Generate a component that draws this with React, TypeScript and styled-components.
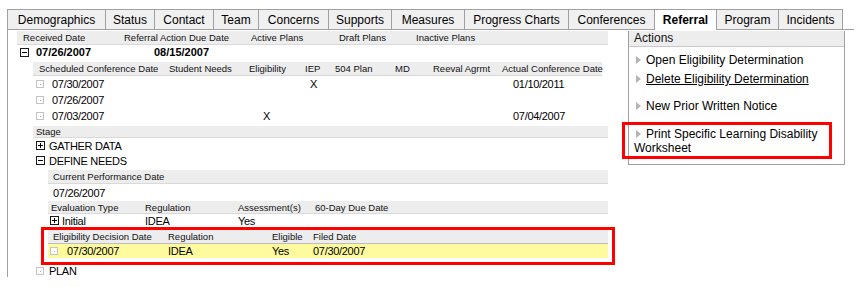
import React from "react";
import styled, { createGlobalStyle } from "styled-components";

const GlobalStyle = createGlobalStyle`
  html, body { margin: 0; padding: 0; background: #ffffff; }
  body { font-family: "Liberation Sans", Arial, Helvetica, sans-serif; color: #000; }
  * { box-sizing: border-box; }
`;

const Page = styled.div`
  width: 866px;
  height: 287px;
  overflow: hidden;
  padding: 9px 0 0 7px;
`;

const TabBar = styled.div`
  display: flex;
  width: 847px;
  height: 21px;
  border-bottom: 1px solid #a0a0a0;
`;

const Tab = styled.div<{ $w: number; $active?: boolean; $first?: boolean }>`
  width: ${(p) => p.$w}px;
  height: ${(p) => (p.$active ? 21 : 20)}px;
  border-top: 1px solid #a0a0a0;
  border-right: 1px solid #a0a0a0;
  border-left: ${(p) => (p.$first ? "1px solid #a0a0a0" : "none")};
  background: ${(p) => (p.$active ? "#ffffff" : "#f0f0f0")};
  font-size: 12px;
  font-weight: ${(p) => (p.$active ? 700 : 400)};
  display: flex;
  align-items: center;
  justify-content: center;
  padding-bottom: ${(p) => (p.$active ? 1 : 0)}px;
  white-space: nowrap;
`;

const Content = styled.div`
  display: flex;
  align-items: flex-start;
  gap: 12px;
`;

const LeftPanel = styled.div`
  width: 609px;
  height: 247px;
  border-left: 1px solid #a0a0a0;
  padding: 1px 8px 0 9px;
`;

const Block = styled.div<{ $ml?: number; $mt?: number; $mr?: number }>`
  display: flex;
  flex-direction: column;
  margin-left: ${(p) => p.$ml ?? 0}px;
  margin-top: ${(p) => p.$mt ?? 0}px;
  margin-right: ${(p) => p.$mr ?? 0}px;
`;

const HeadRow = styled.div<{ $cols: string; $h: number; $pad: number; $line?: string }>`
  display: grid;
  grid-template-columns: ${(p) => p.$cols};
  height: ${(p) => p.$h}px;
  padding-left: ${(p) => p.$pad}px;
  background: #ededed;
  border-bottom: 1px solid ${(p) => p.$line ?? "#d9d9d9"};
  font-size: 9.5px;
  color: #111;
  align-items: center;
  white-space: nowrap;
`;

const DataRow = styled.div<{ $cols: string; $h: number; $pad: number; $bg?: string; $bold?: boolean }>`
  display: grid;
  grid-template-columns: ${(p) => p.$cols};
  height: ${(p) => p.$h}px;
  padding-left: ${(p) => p.$pad}px;
  background: ${(p) => p.$bg ?? "transparent"};
  font-size: 11px;
  font-weight: ${(p) => (p.$bold ? 700 : 400)};
  letter-spacing: ${(p) => (p.$bold ? "0" : "-0.3px")};
  align-items: center;
  white-space: nowrap;
`;

const Cell = styled.span<{ $pl?: number; $gap?: number; $ml?: number }>`
  display: flex;
  align-items: center;
  gap: ${(p) => p.$gap ?? 0}px;
  padding-left: ${(p) => p.$pl ?? 0}px;
  margin-left: ${(p) => p.$ml ?? 0}px;
`;

const Highlight = styled.div`
  margin: 0 -7px;
  border: 3px solid #ff0000;
  border-top-width: 3px;
  padding: 0 4px 4px 4px;
  display: flex;
  flex-direction: column;
`;

const ActionsPanel = styled.div`
  width: 217px;
  margin-top: 1px;
  border: 1px solid #a0a0a0;
  border-top: none;
  padding-bottom: 5px;
  display: flex;
  flex-direction: column;
`;

const ActionsHeader = styled.div`
  height: 16px;
  background: #ededed;
  border-bottom: 1px solid #c8c8c8;
  font-size: 12px;
  line-height: 15px;
  padding-left: 5px;
  color: #111;
`;

const ActionItem = styled.div<{ $mt: number; $underline?: boolean; $pl?: number }>`
  margin-top: ${(p) => p.$mt}px;
  padding-left: ${(p) => p.$pl ?? 5}px;
  font-size: 12px;
  line-height: 14px;
  color: #000;
  text-decoration: ${(p) => (p.$underline ? "underline" : "none")};
`;

const ActionHighlight = styled.div`
  margin: 9px 12px 0 -7px;
  border: 3px solid #ff0000;
  padding: 2px 3px 1px 9px;
`;

const Arrow = styled.span`
  display: inline-block;
  width: 0;
  height: 0;
  margin: 0 5px 0 2px;
  border-top: 4px solid transparent;
  border-bottom: 4px solid transparent;
  border-left: 5px solid #b4b4b4;
  vertical-align: 0px;
`;

const Toggle = ({ open }: { open: boolean }) => (
  <svg width="9" height="9" viewBox="0 0 9 9" shapeRendering="crispEdges" style={{ flex: "none" }}>
    <rect x="0.5" y="0.5" width="8" height="8" fill="#fff" stroke="#1a1a1a" />
    <line x1="2" y1="4.5" x2="7" y2="4.5" stroke="#000" />
    {!open && <line x1="4.5" y1="2" x2="4.5" y2="7" stroke="#000" />}
  </svg>
);

const Leaf = () => (
  <svg width="8" height="8" viewBox="0 0 8 8" shapeRendering="crispEdges" style={{ flex: "none" }}>
    <rect x="0.5" y="0.5" width="7" height="7" fill="#fff" stroke="#c4c4c4" />
    <rect x="3.5" y="3.5" width="1" height="1" fill="#b0b0b0" />
  </svg>
);

const tabs: { label: string; w: number; active?: boolean }[] = [
  { label: "Demographics", w: 99 },
  { label: "Status", w: 49 },
  { label: "Contact", w: 59 },
  { label: "Team", w: 45 },
  { label: "Concerns", w: 70 },
  { label: "Supports", w: 63 },
  { label: "Measures", w: 73 },
  { label: "Progress Charts", w: 104 },
  { label: "Conferences", w: 86 },
  { label: "Referral", w: 62, active: true },
  { label: "Program", w: 62 },
  { label: "Incidents", w: 64 },
];

const L0_COLS = "101px 127px 88px 77px 1fr";
const CONF_COLS = "130px 80px 56px 30px 60px 38px 69px 1fr";
const EVAL_COLS = "94px 93px 77px 1fr";
const ELIG_COLS = "115px 104px 41px 1fr";

const conferences = [
  { date: "07/30/2007", elig: "", iep: "X", actual: "01/10/2011" },
  { date: "07/26/2007", elig: "", iep: "", actual: "" },
  { date: "07/03/2007", elig: "X", iep: "", actual: "07/04/2007" },
];

export default function App() {
  return (
    <>
      <GlobalStyle />
      <Page>
        <TabBar>
          {tabs.map((t, i) => (
            <Tab key={t.label} $w={t.w} $active={t.active} $first={i === 0}>
              {t.label}
            </Tab>
          ))}
        </TabBar>
        <Content>
          <LeftPanel>
            <Block>
              <HeadRow $cols={L0_COLS} $h={14} $pad={6}>
                <span>Received Date</span>
                <span>Referral Action Due Date</span>
                <span>Active Plans</span>
                <span>Draft Plans</span>
                <span>Inactive Plans</span>
              </HeadRow>
              <DataRow $cols="134px 1fr" $h={14} $pad={3} $bold>
                <Cell $gap={7}>
                  <Toggle open />
                  07/26/2007
                </Cell>
                <Cell>08/15/2007</Cell>
              </DataRow>

              <Block $ml={16} $mt={3} $mr={6}>
                <HeadRow $cols={CONF_COLS} $h={14} $pad={6}>
                  <span>Scheduled Conference Date</span>
                  <span>Student Needs</span>
                  <span>Eligibility</span>
                  <span>IEP</span>
                  <span>504 Plan</span>
                  <span>MD</span>
                  <span>Reeval Agrmt</span>
                  <span>Actual Conference Date</span>
                </HeadRow>
                {conferences.map((c) => (
                  <DataRow key={c.date} $cols={CONF_COLS} $h={16} $pad={6}>
                    <Cell $ml={-3} $gap={8}>
                      <Leaf />
                      {c.date}
                    </Cell>
                    <Cell />
                    <Cell $pl={14}>{c.elig}</Cell>
                    <Cell $pl={5}>{c.iep}</Cell>
                    <Cell />
                    <Cell />
                    <Cell />
                    <Cell $pl={11}>{c.actual}</Cell>
                  </DataRow>
                ))}
              </Block>

              <Block $ml={16} $mt={2}>
                <HeadRow $cols="1fr" $h={12} $pad={3}>
                  <span>Stage</span>
                </HeadRow>
                <DataRow $cols="1fr" $h={15} $pad={3}>
                  <Cell $gap={4}>
                    <Toggle open={false} />
                    GATHER DATA
                  </Cell>
                </DataRow>
                <DataRow $cols="1fr" $h={15} $pad={3}>
                  <Cell $gap={4}>
                    <Toggle open />
                    DEFINE NEEDS
                  </Cell>
                </DataRow>

                <Block $ml={15} $mt={2}>
                  <HeadRow $cols="1fr" $h={14} $pad={5}>
                    <span>Current Performance Date</span>
                  </HeadRow>
                  <DataRow $cols="1fr" $h={17} $pad={5}>
                    <Cell>07/26/2007</Cell>
                  </DataRow>
                  <HeadRow $cols={EVAL_COLS} $h={13} $pad={3}>
                    <span>Evaluation Type</span>
                    <span>Regulation</span>
                    <span>Assessment(s)</span>
                    <span>60-Day Due Date</span>
                  </HeadRow>
                  <DataRow $cols={EVAL_COLS} $h={13} $pad={3}>
                    <Cell $ml={-1} $gap={3}>
                      <Toggle open={false} />
                      Initial
                    </Cell>
                    <Cell>IDEA</Cell>
                    <Cell>Yes</Cell>
                    <Cell />
                  </DataRow>
                  <Highlight>
                    <HeadRow $cols={ELIG_COLS} $h={14} $pad={5} $line="#bdbdbd">
                      <span>Eligibility Decision Date</span>
                      <span>Regulation</span>
                      <span>Eligible</span>
                      <span>Filed Date</span>
                    </HeadRow>
                    <DataRow $cols={ELIG_COLS} $h={14} $pad={5} $bg="#fefb9f">
                      <Cell $ml={-3} $gap={9}>
                        <Leaf />
                        07/30/2007
                      </Cell>
                      <Cell>IDEA</Cell>
                      <Cell>Yes</Cell>
                      <Cell>07/30/2007</Cell>
                    </DataRow>
                  </Highlight>
                </Block>

                <DataRow $cols="1fr" $h={12} $pad={3}>
                  <Cell $gap={5}>
                    <Leaf />
                    PLAN
                  </Cell>
                </DataRow>
              </Block>
            </Block>
          </LeftPanel>

          <ActionsPanel>
            <ActionsHeader>Actions</ActionsHeader>
            <ActionItem $mt={6}>
              <Arrow />
              Open Eligibility Determination
            </ActionItem>
            <ActionItem $mt={5}>
              <Arrow />
              <span style={{ textDecoration: "underline" }}>Delete Eligibility Determination</span>
            </ActionItem>
            <ActionItem $mt={13}>
              <Arrow />
              New Prior Written Notice
            </ActionItem>
            <ActionHighlight>
              <ActionItem $mt={0} $pl={0}>
                <Arrow />
                Print Specific Learning Disability Worksheet
              </ActionItem>
            </ActionHighlight>
          </ActionsPanel>
        </Content>
      </Page>
    </>
  );
}
